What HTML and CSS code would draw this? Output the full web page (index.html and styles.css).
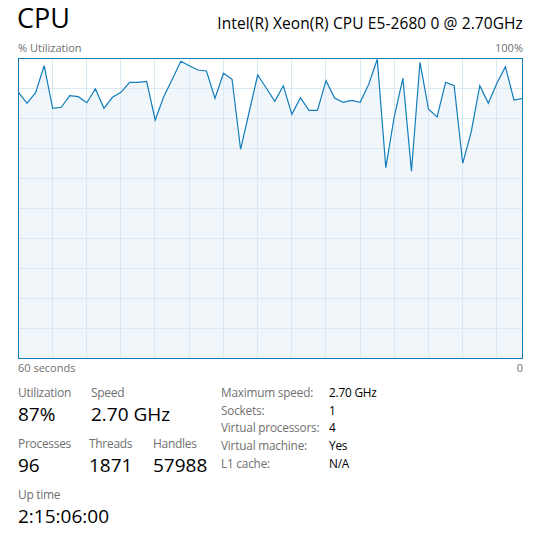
FILE: index.html
```html
<!DOCTYPE html>
<html>
<head>
<meta charset="utf-8">
<link rel="stylesheet" href="styles.css">
</head>
<body>
<div class="page">
  <div class="header">
    <div class="title">CPU</div>
    <div class="model">Intel(R) Xeon(R) CPU E5-2680 0 @ 2.70GHz</div>
  </div>
  <div class="axis axis-top"><span>% Utilization</span><span>100%</span></div>
  <svg class="graph" width="505" height="301" viewBox="0 0 505 301">
    <polygon class="area" points="0.5,34.3 9.04,45.3 17.58,34.7 26.13,7.7 34.67,50.3 43.21,49.3 51.75,37.7 60.3,38.7 68.84,44.7 77.38,30.7 85.92,50.3 94.47,39.3 103.01,34.3 111.55,24.3 120.09,24.3 128.64,23.3 137.18,62 145.72,38.7 154.26,21.3 162.81,3.3 171.35,7.7 179.89,12 188.43,13 196.98,40.3 205.52,15.3 214.06,21.3 222.6,91.3 231.14,54 239.69,17 248.23,30 256.77,43.3 265.31,27.7 273.86,56.3 282.4,39.7 290.94,52.3 299.48,52.3 308.03,22.7 316.57,40 325.11,44.3 333.65,42.3 342.2,44.3 350.74,26.3 359.28,1.3 367.82,109.7 376.37,58 384.91,20.3 393.45,113.3 401.99,4.3 410.54,51.3 419.08,59 427.62,24.3 436.16,27.7 444.71,105.3 453.25,73.7 461.79,27.7 470.33,45.3 478.88,25.3 487.42,8.7 495.96,42 504.5,40.3 504.5,300.5 0.5,300.5"/>
    <g class="grid">
      <line x1="0" y1="30.5" x2="505" y2="30.5"/>
      <line x1="0" y1="60.5" x2="505" y2="60.5"/>
      <line x1="0" y1="90.5" x2="505" y2="90.5"/>
      <line x1="0" y1="120.5" x2="505" y2="120.5"/>
      <line x1="0" y1="150.5" x2="505" y2="150.5"/>
      <line x1="0" y1="180.5" x2="505" y2="180.5"/>
      <line x1="0" y1="210.5" x2="505" y2="210.5"/>
      <line x1="0" y1="240.5" x2="505" y2="240.5"/>
      <line x1="0" y1="270.5" x2="505" y2="270.5"/>
      <line x1="34.5" y1="0" x2="34.5" y2="301"/>
      <line x1="68.5" y1="0" x2="68.5" y2="301"/>
      <line x1="102.5" y1="0" x2="102.5" y2="301"/>
      <line x1="136.5" y1="0" x2="136.5" y2="301"/>
      <line x1="171.5" y1="0" x2="171.5" y2="301"/>
      <line x1="205.5" y1="0" x2="205.5" y2="301"/>
      <line x1="239.5" y1="0" x2="239.5" y2="301"/>
      <line x1="273.5" y1="0" x2="273.5" y2="301"/>
      <line x1="307.5" y1="0" x2="307.5" y2="301"/>
      <line x1="342.5" y1="0" x2="342.5" y2="301"/>
      <line x1="376.5" y1="0" x2="376.5" y2="301"/>
      <line x1="410.5" y1="0" x2="410.5" y2="301"/>
      <line x1="444.5" y1="0" x2="444.5" y2="301"/>
      <line x1="478.5" y1="0" x2="478.5" y2="301"/>
    </g>
    <polyline class="line" points="0.5,34.3 9.04,45.3 17.58,34.7 26.13,7.7 34.67,50.3 43.21,49.3 51.75,37.7 60.3,38.7 68.84,44.7 77.38,30.7 85.92,50.3 94.47,39.3 103.01,34.3 111.55,24.3 120.09,24.3 128.64,23.3 137.18,62 145.72,38.7 154.26,21.3 162.81,3.3 171.35,7.7 179.89,12 188.43,13 196.98,40.3 205.52,15.3 214.06,21.3 222.6,91.3 231.14,54 239.69,17 248.23,30 256.77,43.3 265.31,27.7 273.86,56.3 282.4,39.7 290.94,52.3 299.48,52.3 308.03,22.7 316.57,40 325.11,44.3 333.65,42.3 342.2,44.3 350.74,26.3 359.28,1.3 367.82,109.7 376.37,58 384.91,20.3 393.45,113.3 401.99,4.3 410.54,51.3 419.08,59 427.62,24.3 436.16,27.7 444.71,105.3 453.25,73.7 461.79,27.7 470.33,45.3 478.88,25.3 487.42,8.7 495.96,42 504.5,40.3"/>
    <rect class="frame" x="0.5" y="0.5" width="504" height="300"/>
  </svg>
  <div class="axis axis-bottom"><span>60 seconds</span><span>0</span></div>
  <div class="stats">
    <div class="stats-left">
      <div class="row">
        <div class="stat w73"><div class="label">Utilization</div><div class="value">87%</div></div>
        <div class="stat"><div class="label">Speed</div><div class="value">2.70 GHz</div></div>
      </div>
      <div class="row">
        <div class="stat w71"><div class="label">Processes</div><div class="value">96</div></div>
        <div class="stat w64"><div class="label">Threads</div><div class="value">1871</div></div>
        <div class="stat"><div class="label">Handles</div><div class="value">57988</div></div>
      </div>
      <div class="row">
        <div class="stat"><div class="label">Up time</div><div class="value">2:15:06:00</div></div>
      </div>
    </div>
    <div class="props">
      <div class="pk">Maximum speed:</div><div class="pv">2.70 GHz</div>
      <div class="pk">Sockets:</div><div class="pv">1</div>
      <div class="pk">Virtual processors:</div><div class="pv">4</div>
      <div class="pk">Virtual machine:</div><div class="pv">Yes</div>
      <div class="pk">L1 cache:</div><div class="pv">N/A</div>
    </div>
  </div>
</div>
</body>
</html>
```

FILE: styles.css
```css
html, body {
  margin: 0;
  padding: 0;
  background: #ffffff;
}
.page {
  width: 536px;
  height: 548px;
  padding: 0 13px 0 18px;
  box-sizing: border-box;
  font-family: "Open Sans", "Noto Sans", sans-serif;
  color: #000;
}
.header {
  display: flex;
  justify-content: space-between;
  align-items: baseline;
  height: 41px;
}
.title {
  font-size: 27px;
  line-height: 36px;
  font-weight: 400;
  margin-left: -1px;
}
.model {
  font-size: 15.5px;
  letter-spacing: 0.1px;
  color: #000;
  position: relative;
  top: 1px;
}
.axis {
  display: flex;
  justify-content: space-between;
  font-size: 11px;
  line-height: 14px;
  color: #707070;
}
.axis-top {
  height: 17px;
}
.graph {
  display: block;
}
.area {
  fill: #f1f6fa;
}
.grid line {
  stroke: #d9e9f4;
  stroke-width: 1;
}
.line {
  fill: none;
  stroke: #117dbb;
  stroke-width: 1.2;
  stroke-linejoin: miter;
}
.frame {
  fill: none;
  stroke: #117dbb;
  stroke-width: 1;
}
.axis-bottom {
  margin-top: 2px;
  height: 16px;
}
.stats {
  display: flex;
  margin-top: 8px;
}
.stats-left {
  width: 203px;
}
.row {
  display: flex;
  margin-bottom: 9px;
}
.stat.w73 { width: 73px; }
.stat.w71 { width: 71px; }
.stat.w64 { width: 64px; }
.label {
  font-size: 12px;
  line-height: 16px;
  letter-spacing: -0.3px;
  color: #707070;
}
.value {
  font-size: 19px;
  line-height: 26px;
}
.props {
  display: grid;
  grid-template-columns: 108px auto;
  grid-auto-rows: 17.7px;
  font-size: 11.8px;
  line-height: 17.7px;
  letter-spacing: -0.2px;
  align-content: start;
  margin-top: -1px;
}
.pk {
  color: #707070;
  white-space: nowrap;
}
.pv {
  color: #000;
}
```
